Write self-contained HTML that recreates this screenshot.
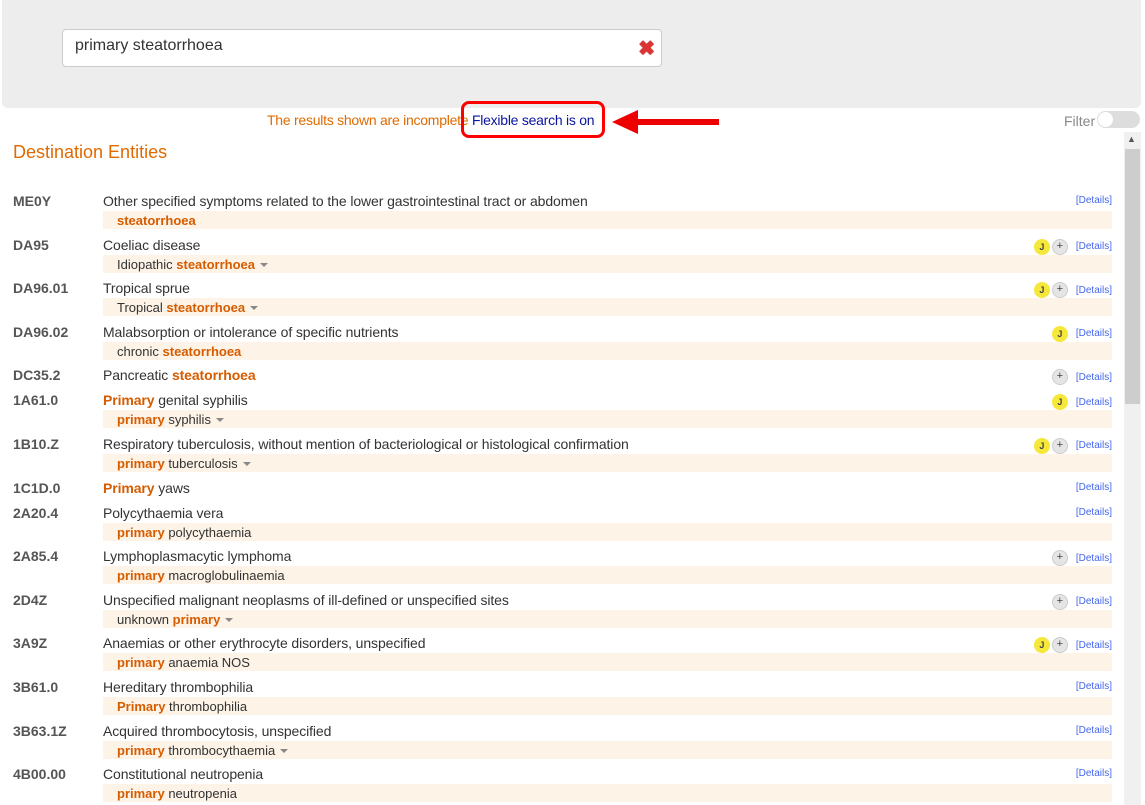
<!DOCTYPE html>
<html><head><meta charset="utf-8"><style>
*{box-sizing:border-box;margin:0;padding:0}
body{width:1145px;height:805px;overflow:hidden;background:#fff;font-family:"Liberation Sans",sans-serif;color:#333;position:relative}
.hdr{position:absolute;left:2px;top:0;width:1139px;height:108px;background:#ededed;border-radius:0 0 6px 6px}
.search{position:absolute;left:62px;top:29px;width:600px;height:38px;background:#fff;border:1px solid #ccc;border-radius:4px;font-size:16px;padding:7px 12px;color:#333}
.x{position:absolute;right:6px;top:6px;font-size:20px;font-weight:bold;color:#d33;text-shadow:0 0 1px #600}
.msg{position:absolute;left:267px;top:112px;font-size:14px;letter-spacing:-0.25px;color:#e06a00;white-space:nowrap}
.msg span{color:#0b14a0}
.box{position:absolute;left:461px;top:101px;width:144px;height:37px;border:3px solid #f00;border-radius:8px}
.arrow{position:absolute;left:612px;top:110px}
.filter{position:absolute;left:1064px;top:113px;font-size:14px;color:#888}
.tog{position:absolute;left:1097px;top:111px;width:43px;height:17px;border-radius:9px;background:#ddd}
.tog::after{content:"";position:absolute;left:1px;top:1px;width:15px;height:15px;border-radius:50%;background:#fff}
.sb{position:absolute;left:1124px;top:132px;width:17px;height:673px;background:#f0f0f0}
.thumb{position:absolute;left:1125px;top:149px;width:15px;height:255px;background:#cdcdcd}
.up{position:absolute;left:1127px;top:134px;font-size:9px;color:#555}
h2{position:absolute;left:13px;top:142px;font-size:18px;font-weight:normal;color:#e06a00}
.list{position:absolute;left:0;top:188px;width:1120px}
.r{position:relative;height:23px}
.r.n{height:25px}
.code{position:absolute;left:13px;top:5px;font-size:14px;font-weight:bold;color:#555}
.t{position:absolute;left:103px;top:5px;font-size:14px;color:#333;letter-spacing:-0.1px}
.sub{margin-left:103px;width:1009px;height:18px;background:#fdf3e7;font-size:13px;padding:1px 14px 0;line-height:17px;color:#333;margin-bottom:2.6px}
b{color:#d65c00}
.tri{display:inline-block;margin-left:5px;border:4px solid transparent;border-top:4px solid #888;vertical-align:-2px}
.ic{position:absolute;right:8px;top:7px;font-size:10px;display:flex;align-items:center;gap:2px}
.ic a{color:#4466ee;margin-left:6px}
.j{width:16px;height:16px;border-radius:50%;background:#f5e83a;font-size:9px;font-weight:bold;text-align:center;line-height:16px;color:#444}
.p{width:16px;height:16px;border-radius:50%;background:#e5e5e5;border:1px solid #ccc;font-size:11px;text-align:center;line-height:13px;color:#444}
</style></head><body>
<div class="hdr"></div>
<div class="search">primary steatorrhoea<span class="x">✖</span></div>
<div class="msg">The results shown are incomplete <span>Flexible search is on</span></div>
<div class="box"></div>
<svg class="arrow" width="110" height="24"><polygon points="0,12 26,0 26,9 107,9 107,15 26,15 26,24" fill="#e00"/></svg>
<div class="filter">Filter</div><div class="tog"></div>
<div class="sb"></div><div class="thumb"></div><div class="up">▲</div>
<h2>Destination Entities</h2>
<div class="list">
<div class="r"><span class="code">ME0Y</span><span class="t">Other specified symptoms related to the lower gastrointestinal tract or abdomen</span><span class="ic"><a>[Details]</a></span></div><div class="sub"><b>steatorrhoea</b></div>
<div class="r"><span class="code">DA95</span><span class="t">Coeliac disease</span><span class="ic"><span class="j">J</span><span class="p">+</span><a>[Details]</a></span></div><div class="sub">Idiopathic <b>steatorrhoea</b><span class="tri"></span></div>
<div class="r"><span class="code">DA96.01</span><span class="t">Tropical sprue</span><span class="ic"><span class="j">J</span><span class="p">+</span><a>[Details]</a></span></div><div class="sub">Tropical <b>steatorrhoea</b><span class="tri"></span></div>
<div class="r"><span class="code">DA96.02</span><span class="t">Malabsorption or intolerance of specific nutrients</span><span class="ic"><span class="j">J</span><a>[Details]</a></span></div><div class="sub">chronic <b>steatorrhoea</b></div>
<div class="r n"><span class="code">DC35.2</span><span class="t">Pancreatic <b>steatorrhoea</b></span><span class="ic"><span class="p">+</span><a>[Details]</a></span></div>
<div class="r"><span class="code">1A61.0</span><span class="t"><b>Primary</b> genital syphilis</span><span class="ic"><span class="j">J</span><a>[Details]</a></span></div><div class="sub"><b>primary</b> syphilis<span class="tri"></span></div>
<div class="r"><span class="code">1B10.Z</span><span class="t">Respiratory tuberculosis, without mention of bacteriological or histological confirmation</span><span class="ic"><span class="j">J</span><span class="p">+</span><a>[Details]</a></span></div><div class="sub"><b>primary</b> tuberculosis<span class="tri"></span></div>
<div class="r n"><span class="code">1C1D.0</span><span class="t"><b>Primary</b> yaws</span><span class="ic"><a>[Details]</a></span></div>
<div class="r"><span class="code">2A20.4</span><span class="t">Polycythaemia vera</span><span class="ic"><a>[Details]</a></span></div><div class="sub"><b>primary</b> polycythaemia</div>
<div class="r"><span class="code">2A85.4</span><span class="t">Lymphoplasmacytic lymphoma</span><span class="ic"><span class="p">+</span><a>[Details]</a></span></div><div class="sub"><b>primary</b> macroglobulinaemia</div>
<div class="r"><span class="code">2D4Z</span><span class="t">Unspecified malignant neoplasms of ill-defined or unspecified sites</span><span class="ic"><span class="p">+</span><a>[Details]</a></span></div><div class="sub">unknown <b>primary</b><span class="tri"></span></div>
<div class="r"><span class="code">3A9Z</span><span class="t">Anaemias or other erythrocyte disorders, unspecified</span><span class="ic"><span class="j">J</span><span class="p">+</span><a>[Details]</a></span></div><div class="sub"><b>primary</b> anaemia NOS</div>
<div class="r"><span class="code">3B61.0</span><span class="t">Hereditary thrombophilia</span><span class="ic"><a>[Details]</a></span></div><div class="sub"><b>Primary</b> thrombophilia</div>
<div class="r"><span class="code">3B63.1Z</span><span class="t">Acquired thrombocytosis, unspecified</span><span class="ic"><a>[Details]</a></span></div><div class="sub"><b>primary</b> thrombocythaemia<span class="tri"></span></div>
<div class="r"><span class="code">4B00.00</span><span class="t">Constitutional neutropenia</span><span class="ic"><a>[Details]</a></span></div><div class="sub"><b>primary</b> neutropenia</div>
</div>
</body></html>
